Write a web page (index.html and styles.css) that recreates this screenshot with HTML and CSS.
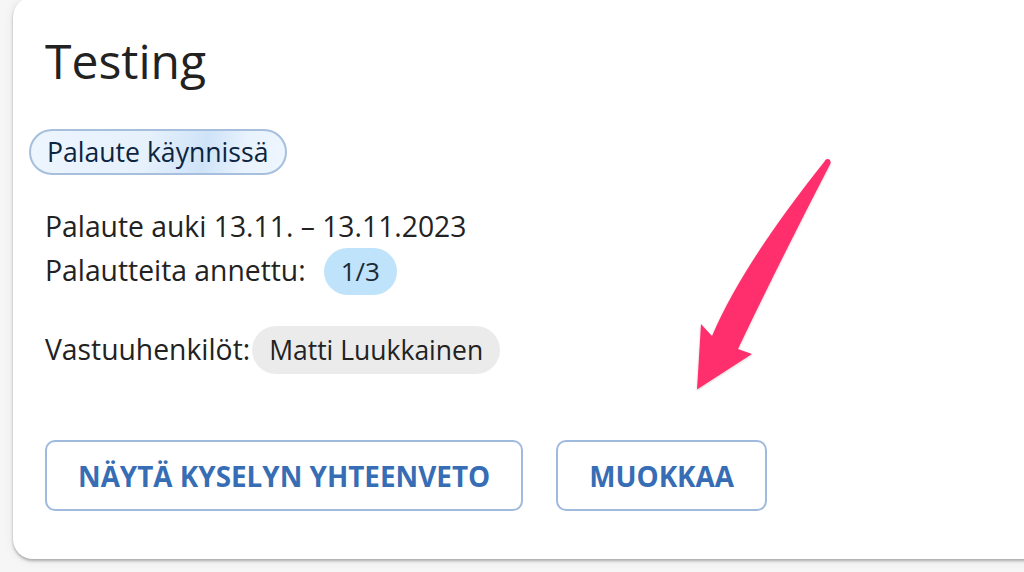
FILE: index.html
```html
<!DOCTYPE html>
<html lang="fi">
<head>
<meta charset="utf-8">
<title>Testing</title>
<link rel="stylesheet" href="styles.css">
</head>
<body>
<div class="page">
  <section class="card">
    <h1 class="title">Testing</h1>
    <div class="status">
      <span class="status-chip">Palaute käynnissä</span>
    </div>
    <div class="info">
      <p class="line">Palaute auki 13.11. – 13.11.2023</p>
      <p class="line row count-row"><span>Palautteita annettu:</span><span class="count">1/3</span></p>
    </div>
    <div class="row people"><span class="label">Vastuuhenkilöt:</span><span class="person">Matti Luukkainen</span></div>
    <div class="actions">
      <button class="btn" type="button">Näytä kyselyn yhteenveto</button>
      <button class="btn" type="button">Muokkaa</button>
    </div>
  </section>
  <svg class="annotation" width="1024" height="572" viewBox="0 0 1024 572" aria-hidden="true">
    <defs>
      <filter id="soft" x="-20%" y="-20%" width="140%" height="140%">
        <feDropShadow dx="0" dy="1" stdDeviation="1.2" flood-color="#000" flood-opacity="0.18"/>
      </filter>
    </defs>
    <path filter="url(#soft)" fill="#ff2f6c" d="M824.5,164.5 C826,160.5 831.5,161.5 830.5,166.5 Q781,262 738,352 L752,357 L697,392.5 L701,327 L712,339 Q742,268 824.5,164.5 Z"/>
  </svg>
</div>
</body>
</html>
```

FILE: styles.css
```css
html, body {
  margin: 0;
  padding: 0;
}

body {
  background: #f6f6f6;
  font-family: "Open Sans", "Noto Sans", sans-serif;
  color: #222222;
  overflow: hidden;
  width: 1024px;
  height: 572px;
}

.page {
  position: relative;
  width: 1024px;
  height: 572px;
}

.card {
  margin: -3px 0 0 13px;
  width: 1060px;
  box-sizing: border-box;
  padding: 34px 32px 48px 32px;
  background: #ffffff;
  border-radius: 20px;
  box-shadow: 0 2px 3px rgba(0, 0, 0, 0.28), 0 1px 12px rgba(0, 0, 0, 0.07);
}

.title {
  margin: 0;
  font-size: 48px;
  font-weight: 400;
  line-height: 59px;
  color: #222222;
}

.status {
  margin-top: 39px;
  display: flex;
}

.status-chip {
  margin-left: -16px;
  height: 46px;
  box-sizing: border-box;
  display: inline-flex;
  align-items: center;
  padding: 0 17px 0 16px;
  border: 2px solid #a5bfdd;
  border-radius: 23px;
  font-size: 26.6px;
  color: #0c2440;
  background: linear-gradient(100deg, #edf5fe 0%, #e6f1fc 45%, #cfe3f8 68%, #e9f3fd 84%, #eef6fe 100%);
}

.info {
  margin-top: 30px;
}

.line {
  margin: 0;
  font-size: 28.3px;
  line-height: 42px;
}

.row {
  display: flex;
  align-items: baseline;
}

.count-row {
  margin-top: 1px;
}

.count {
  margin-left: 18px;
  height: 47px;
  box-sizing: border-box;
  padding: 0 17px;
  border-radius: 24px;
  background: #bfe3fa;
  font-size: 26px;
  line-height: 47px;
  color: #1d2a36;
}

.people {
  margin-top: 31px;
  font-size: 28.3px;
  line-height: 42px;
}

.person {
  margin-left: 2px;
  height: 48px;
  box-sizing: border-box;
  padding: 0 17px;
  border-radius: 24px;
  background: #ebebeb;
  font-size: 26.5px;
  line-height: 48px;
  color: #222222;
}

.actions {
  margin-top: 66px;
  display: flex;
  gap: 33px;
}

.btn {
  height: 71px;
  box-sizing: border-box;
  padding: 0 31px;
  display: inline-flex;
  align-items: center;
  justify-content: center;
  background: #ffffff;
  border: 2px solid #9fbadd;
  border-radius: 10px;
  font-family: "Open Sans", "Noto Sans", sans-serif;
  font-size: 27.85px;
  font-weight: 700;
  letter-spacing: 0;
  text-transform: uppercase;
  color: #376db4;
  cursor: pointer;
}

.annotation {
  position: absolute;
  left: 0;
  top: 0;
  pointer-events: none;
}
```
